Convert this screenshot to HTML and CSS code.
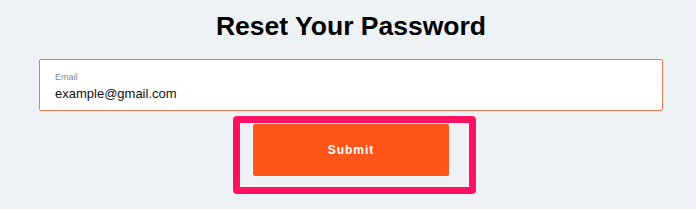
FILE: index.html
```html
<!DOCTYPE html>
<html>
<head>
<meta charset="utf-8">
<link rel="stylesheet" href="styles.css">
</head>
<body>
<div class="page">
  <h1 class="title">Reset Your Password</h1>
  <div class="field">
    <div class="label">Email</div>
    <div class="value">example@gmail.com</div>
  </div>
  <div class="actions">
    <div class="btn-wrap">
      <button class="submit">Submit</button>
      <div class="highlight"></div>
    </div>
  </div>
</div>
</body>
</html>
```
FILE: styles.css
```css
html, body {
  margin: 0;
  padding: 0;
  background: #eff2f5;
  font-family: "Liberation Sans", Arial, sans-serif;
}
.page {
  width: 696px;
  height: 209px;
  padding: 11px 33px 0 39px;
  box-sizing: border-box;
  display: flex;
  flex-direction: column;
  align-items: stretch;
}
.title {
  margin: 0;
  font-size: 26.5px;
  font-weight: bold;
  line-height: 30px;
  text-align: center;
  color: #000;
}
.field {
  margin-top: 18px;
  height: 52px;
  box-sizing: border-box;
  border: 1px solid #f07a55;
  border-radius: 2px;
  background: #fff;
  padding: 12px 15px 0 15px;
}
.label {
  font-size: 9px;
  line-height: 11px;
  color: #8a8a8a;
}
.value {
  margin-top: 3px;
  font-size: 13px;
  line-height: 16px;
  color: #111;
}
.actions {
  display: flex;
  justify-content: center;
  margin-top: 13px;
}
.btn-wrap {
  position: relative;
}
.submit {
  display: block;
  width: 196px;
  height: 52px;
  border: none;
  border-radius: 2px;
  background: #ff5519;
  color: #fff;
  font-family: "Liberation Sans", Arial, sans-serif;
  font-weight: bold;
  font-size: 12px;
  letter-spacing: 1px;
  padding: 0;
}
.highlight {
  position: absolute;
  left: -20px;
  top: -8px;
  width: 243px;
  height: 78px;
  box-sizing: border-box;
  border: 7px solid #ff1060;
  border-radius: 4px;
}
```
